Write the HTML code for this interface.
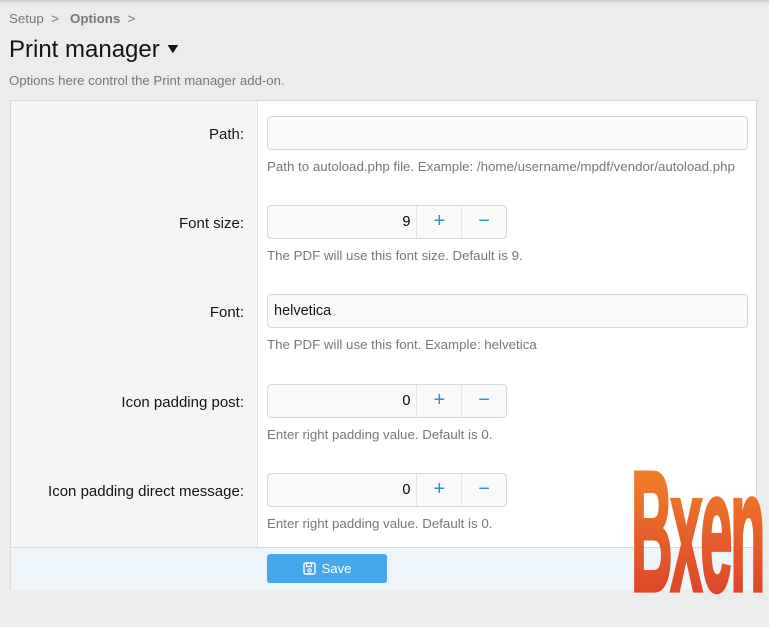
<!DOCTYPE html>
<html><head><style>
body{margin:0;width:769px;height:599px;background:#ececec;font-family:"Liberation Sans",sans-serif;position:relative;overflow:hidden}
.top{position:absolute;left:0;top:0;width:769px;height:4px;background:linear-gradient(#c8c8c8,#ececec)}
.crumb{position:absolute;left:9px;top:11px;font-size:13.3px;color:#777}
.crumb b{color:#777}
h1{position:absolute;left:9px;top:36px;margin:0;font-weight:normal;font-size:24px;color:#141414}
.desc{position:absolute;left:9px;top:73px;font-size:13.2px;color:#777}
.panel{position:absolute;left:10px;top:100px;width:747px;height:490px;border:1px solid #d8d8d8;background:#fff;box-sizing:border-box}
.left{position:absolute;left:0;top:0;width:246px;height:446px;background:#f5f5f5;border-right:1px solid #e2e2e2}
.foot{position:absolute;left:0;top:446px;width:745px;height:42px;background:#edf5fb;border-top:1px solid #d8d8d8}
.lbl{position:absolute;right:512px;font-size:15px;color:#141414;text-align:right;white-space:nowrap}
.inp{position:absolute;left:256px;width:481px;height:34px;border:1px solid #d8d8d8;border-radius:4px;background:#f9f9f9;box-sizing:border-box;font-size:14.5px;padding:8px 6px;color:#141414}
.num{position:absolute;left:256px;width:240px;height:34px;border:1px solid #d8d8d8;border-radius:4px;background:#f9f9f9;box-sizing:border-box;display:flex;font-size:14.5px}
.num .v{width:150px;text-align:right;padding:8px 6px;box-sizing:border-box;border-right:1px solid #e2e2e2}
.num .b{width:44px;text-align:center;color:#2f8fd0;font-size:20px;line-height:31px;border-right:1px solid #e2e2e2}
.num .b:last-child{border:0}
.hint{position:absolute;left:256px;font-size:13.3px;color:#777}
.save{position:absolute;left:256px;top:453px;width:120px;height:29px;background:#47a7eb;border-radius:3px;color:#fff;font-size:13px;line-height:29px;text-align:center}
.logo{position:absolute;left:631px;top:446px;font-family:"Liberation Sans",sans-serif;font-weight:bold;font-size:160px;line-height:1;letter-spacing:-6px;transform:scale(0.36,1.07);transform-origin:left top;background:linear-gradient(#f58a2a,#d93a2a);-webkit-background-clip:text;color:transparent;white-space:nowrap;-webkit-text-stroke:4px transparent}
</style></head><body>
<div class="top"></div>
<div class="crumb">Setup &nbsp;&gt;&nbsp;&nbsp; <b>Options</b> &nbsp;&gt;</div>
<h1>Print manager <span style="font-size:14px;position:relative;top:-4px;display:inline-block;transform:scaleX(1.3)">▼</span></h1>
<div class="desc">Options here control the Print manager add-on.</div>
<div class="panel">
<div class="left"></div>
<div class="lbl" style="top:25px">Path:</div>
<div class="inp" style="top:15px"></div>
<div class="hint" style="top:58px">Path to autoload.php file. Example: /home/username/mpdf/vendor/autoload.php</div>
<div class="lbl" style="top:114px">Font size:</div>
<div class="num" style="top:104px"><div class="v">9</div><div class="b">+</div><div class="b">−</div></div>
<div class="hint" style="top:147px">The PDF will use this font size. Default is 9.</div>
<div class="lbl" style="top:203px">Font:</div>
<div class="inp" style="top:193px">helvetica</div>
<div class="hint" style="top:236px">The PDF will use this font. Example: helvetica</div>
<div class="lbl" style="top:293px">Icon padding post:</div>
<div class="num" style="top:283px"><div class="v">0</div><div class="b">+</div><div class="b">−</div></div>
<div class="hint" style="top:326px">Enter right padding value. Default is 0.</div>
<div class="lbl" style="top:382px">Icon padding direct message:</div>
<div class="num" style="top:372px"><div class="v">0</div><div class="b">+</div><div class="b">−</div></div>
<div class="hint" style="top:415px">Enter right padding value. Default is 0.</div>
<div class="foot"></div>
<div class="save"><svg width="13" height="13" viewBox="0 0 13 13" style="vertical-align:-2px;margin-right:6px"><rect x="1" y="1" width="11" height="11" rx="1.5" fill="none" stroke="#fff" stroke-width="1.4"/><rect x="3.5" y="1" width="5" height="3.5" fill="none" stroke="#fff" stroke-width="1.2"/><circle cx="6.5" cy="8.5" r="1.6" fill="none" stroke="#fff" stroke-width="1.2"/></svg>Save</div>
</div>
<div class="logo">Bxen</div>
</body></html>
